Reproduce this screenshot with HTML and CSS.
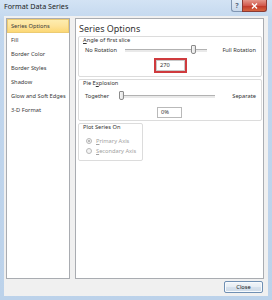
FILE: index.html
```html
<!DOCTYPE html>
<html lang="en">
<head>
    <meta charset="UTF-8">
    <meta name="viewport" content="width=device-width, initial-scale=1.0">
    <title>Format Data Series</title>
    <link rel="stylesheet" href="styles.css">
</head>
<body>
    <div class="window">
        <!-- Title bar -->
        <div class="titlebar">
            <span class="title">Format Data Series</span>
            <div class="controls">
                <span class="ctl help">?</span>
                <span class="ctl close">
                    <svg width="7" height="6" viewBox="0 0 7 6"><path d="M1 0.5 L6 5.5 M6 0.5 L1 5.5" stroke="#fff" stroke-width="1.4"/></svg>
                </span>
            </div>
        </div>

        <div class="client">
            <div class="panes">
                <!-- Category list -->
                <ul class="nav">
                    <li class="active">Series Options</li>
                    <li>Fill</li>
                    <li>Border Color</li>
                    <li>Border Styles</li>
                    <li>Shadow</li>
                    <li>Glow and Soft Edges</li>
                    <li>3-D Format</li>
                </ul>

                <!-- Options -->
                <div class="content">
                    <h2>Series Options</h2>

                    <div class="group angle">
                        <div class="group-label"><u>A</u>ngle of first slice</div>
                        <div class="slider-row">
                            <span class="end-label angle-start">No Rotation</span>
                            <div class="track angle-track"><span class="thumb" style="left: 66px"></span></div>
                            <span class="end-label end">Full Rotation</span>
                        </div>
                        <div class="value-row angle-value">
                            <div class="highlight"><div class="spin">270</div></div>
                        </div>
                    </div>

                    <div class="group explosion">
                        <div class="group-label">Pie E<u>x</u>plosion</div>
                        <div class="slider-row">
                            <span class="end-label explode-start">Together</span>
                            <div class="track explode-track"><span class="thumb" style="left: 0px"></span></div>
                            <span class="end-label end">Separate</span>
                        </div>
                        <div class="value-row explode-value">
                            <div class="spin small">0%</div>
                        </div>
                    </div>

                    <div class="group plot">
                        <div class="group-label">Plot Series On</div>
                        <div class="radio-row first"><span class="radio checked"></span><u>P</u>rimary Axis</div>
                        <div class="radio-row"><span class="radio"></span><u>S</u>econdary Axis</div>
                    </div>
                </div>
            </div>

            <div class="footer">
                <button class="btn">Close</button>
            </div>
        </div>
    </div>
</body>
</html>
```

FILE: styles.css
```css
body {
    margin: 0;
    font-family: "Noto Sans", "Open Sans", sans-serif;
    color: #222;
}
.window {
    width: 272px;
    height: 300px;
    box-sizing: border-box;
    padding: 0 4px 4px;
    display: flex;
    flex-direction: column;
    background: linear-gradient(#d3e3f4, #c2d7ee 20px, #bcd2ea);
}

/* Title bar */
.titlebar {
    height: 16px;
    display: flex;
    align-items: flex-start;
    justify-content: space-between;
}
.title {
    font-size: 7.2px;
    line-height: 13px;
    color: #1b1b1b;
}
.controls {
    display: flex;
    margin-right: 1px;
}
.ctl {
    height: 12px;
    display: flex;
    align-items: center;
    justify-content: center;
    box-sizing: border-box;
    border: 1px solid #8196b2;
    border-top: none;
}
.help {
    width: 11px;
    border-radius: 0 0 0 3px;
    border-right: none;
    background: linear-gradient(#e4edf7, #c9d8ea);
    font-size: 7px;
    font-weight: bold;
    color: #5b6b80;
}
.close {
    width: 25px;
    border-radius: 0 0 3px 0;
    border-color: #8a3a33;
    background: linear-gradient(#e5978b, #d25a4d 50%, #c1392b 55%, #d7643f);
}

/* Client area */
.client {
    flex: 1;
    background: #f0f0f0;
    padding: 2px 4px 3px 2px;
    display: flex;
    flex-direction: column;
}
.panes {
    display: flex;
    gap: 5px;
    height: 261px;
}
.nav {
    width: 64px;
    box-sizing: border-box;
    margin: 0;
    padding: 0;
    list-style: none;
    background: #fff;
    border: 1px solid #a9acb1;
}
.nav li {
    height: 14px;
    line-height: 14px;
    padding-left: 4px;
    font-size: 5.7px;
    color: #3a3a3a;
    white-space: nowrap;
}
.nav li.active {
    background: linear-gradient(#fdeeb3, #fde39a 50%, #fcd66f);
    box-shadow: inset 0 0 0 1px #eccb73;
}
.content {
    flex: 1;
    background: #fff;
    border: 1px solid #a9acb1;
    padding: 0 1px 0 2px;
}
h2 {
    margin: 5px 0 2px 1px;
    font-size: 9px;
    line-height: 10px;
    font-weight: normal;
    color: #333;
}

/* Groups */
.group {
    box-sizing: border-box;
    border: 1px solid #dcdcdc;
    border-radius: 2px;
    padding: 0 5px 0 4px;
    font-size: 5.7px;
}
.group-label {
    line-height: 6px;
    color: #333;
}
.angle {
    height: 41px;
}
.explosion {
    height: 42px;
    margin-top: 2px;
}
.plot {
    width: 65px;
    height: 38px;
    margin-top: 2px;
}
.slider-row {
    display: flex;
    align-items: center;
    height: 10px;
    margin-top: 2px;
    padding-left: 2px;
}
.explosion .slider-row {
    margin-top: 5px;
}
.end-label {
    color: #333;
    white-space: nowrap;
}
.end-label.end {
    margin-left: auto;
}
.angle-start {
    width: 40px;
}
.explode-start {
    width: 34px;
}
.track {
    position: relative;
    height: 2px;
    border-top: 1px solid #b2b2b2;
    background: #e9e9e9;
}
.angle-track {
    width: 82px;
}
.explode-track {
    width: 96px;
}
.thumb {
    position: absolute;
    top: -5px;
    width: 5px;
    height: 9px;
    box-sizing: border-box;
    border: 1px solid #8b8b8b;
    border-radius: 1px 1px 2px 2px;
    background: linear-gradient(90deg, #f7f7f7, #e2e2e2);
}
.value-row {
    display: flex;
}
.angle-value {
    margin-top: 3px;
    padding-left: 71px;
}
.explode-value {
    margin-top: 6px;
    padding-left: 74px;
}
.highlight {
    border: 2px solid #cf3b3e;
}
.spin {
    width: 29px;
    height: 11px;
    box-sizing: border-box;
    border: 1px solid #c9c9c9;
    background: #fff;
    padding-left: 3px;
    line-height: 9px;
    color: #333;
}
.spin.small {
    width: 25px;
    border-color: #b9b9b9;
}
.radio-row {
    display: flex;
    align-items: center;
    height: 10px;
    padding-left: 3px;
    color: #a3a3a3;
    white-space: nowrap;
}
.radio-row.first {
    margin-top: 6px;
}
.radio {
    flex-shrink: 0;
    width: 6px;
    height: 6px;
    box-sizing: border-box;
    border: 1px solid #b9b9b9;
    border-radius: 50%;
    background: #f4f4f4;
    margin-right: 4px;
    display: flex;
    align-items: center;
    justify-content: center;
}
.radio.checked::after {
    content: "";
    width: 2px;
    height: 2px;
    border-radius: 50%;
    background: #a8a8a8;
}

/* Footer */
.footer {
    display: flex;
    justify-content: flex-end;
    margin-top: 2px;
    padding-right: 1px;
}
.btn {
    width: 39px;
    height: 12px;
    padding: 0;
    font-family: inherit;
    font-size: 5.7px;
    color: #222;
    border: 1px solid #6f8fb3;
    border-radius: 2px;
    background: linear-gradient(#f1f5f9, #e6edf4 50%, #d7e2ed 50%, #cddae8);
    box-shadow: inset 0 0 0 1px #f7fafd;
}
```
